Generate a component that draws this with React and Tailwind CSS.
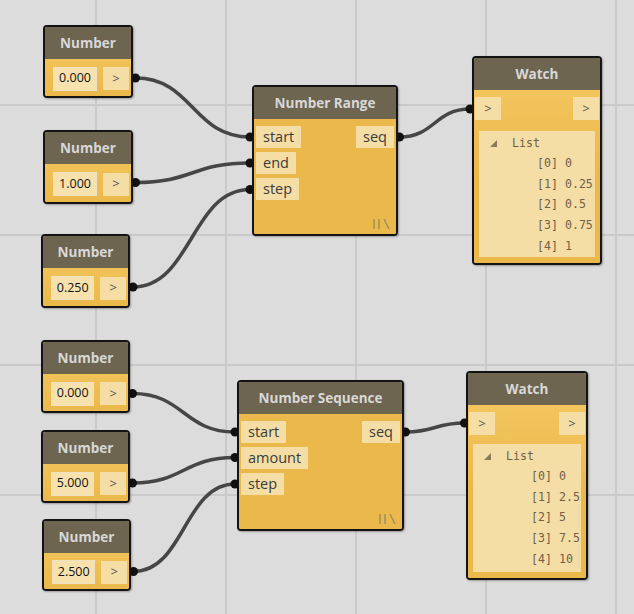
import React from "react";

const SANS = { fontFamily: '"Open Sans", "Noto Sans", sans-serif' };
const MONO = { fontFamily: '"DejaVu Sans Mono", "Liberation Mono", monospace' };

// Connector wires: [fromX, fromY, toX, toY]
const WIRES = [
  [135.5, 78, 250, 137],
  [135.5, 182.5, 250, 163],
  [133, 287, 250, 189.5],
  [399.5, 137, 470, 109],
  [132.5, 393.5, 235, 432],
  [132.5, 483, 235, 457.5],
  [133.5, 571.5, 235, 484],
  [405.5, 432, 464.5, 423],
];

const GRID_X = [96, 226, 356, 486, 616];
const GRID_Y = [105, 235, 365, 495];

function wirePath([x1, y1, x2, y2]) {
  const d = (x2 - x1) * 0.5;
  return `M ${x1} ${y1} C ${x1 + d} ${y1}, ${x2 - d} ${y2}, ${x2} ${y2}`;
}

function CanvasLayer() {
  return (
    <svg className="absolute inset-0" width="634" height="614" viewBox="0 0 634 614">
      {GRID_X.map((x) => (
        <line key={"gx" + x} x1={x} y1="0" x2={x} y2="614" stroke="#cacaca" strokeWidth="2" />
      ))}
      {GRID_Y.map((y) => (
        <line key={"gy" + y} x1="0" y1={y} x2="634" y2={y} stroke="#cacaca" strokeWidth="2" />
      ))}
      {WIRES.map((w, i) => (
        <path key={"w" + i} d={wirePath(w)} fill="none" stroke="#464646" strokeWidth="3.5" />
      ))}
      {WIRES.map((w, i) => (
        <g key={"d" + i}>
          <circle cx={w[0]} cy={w[1]} r="4.5" fill="#111" />
          <circle cx={w[2]} cy={w[3]} r="4.5" fill="#111" />
        </g>
      ))}
    </svg>
  );
}

function Header({ title, className }) {
  return (
    <div
      className={"flex shrink-0 items-center justify-center bg-[#6e6550] text-[13.5px] font-bold text-[#d8d8d8] " + className}
      style={SANS}
    >
      {title}
    </div>
  );
}

function NumberNode({ pos, value }) {
  return (
    <div
      className={"absolute flex flex-col overflow-hidden rounded-[4px] border-2 border-[#141414] shadow-[1px_1px_2px_rgba(0,0,0,0.3)] " + pos}
    >
      <Header title="Number" className="h-[32px]" />
      <div className="flex flex-1 items-center gap-[6px] bg-gradient-to-b from-[#f1c258] to-[#ebb84a] pl-[8px] pr-[2px] pt-[2px]">
        <div
          className="flex h-[24px] w-[44px] items-center justify-center border border-[#efe2c4] bg-[#f7e2ae] text-[12.5px] text-[#111]"
          style={SANS}
        >
          {value}
        </div>
        <div
          className="flex h-[23px] w-[26px] items-center justify-center bg-[#f5dea6] text-[13px] text-[#555]"
          style={SANS}
        >
          &gt;
        </div>
      </div>
    </div>
  );
}

function Lacing() {
  return (
    <svg width="18" height="12" viewBox="0 0 18 12" className="absolute bottom-[4px] right-[5px]">
      <line x1="1" y1="1" x2="1" y2="11" stroke="#9f8a58" strokeWidth="1.4" />
      <line x1="6" y1="1" x2="6" y2="11" stroke="#9f8a58" strokeWidth="1.4" />
      <line x1="11" y1="1" x2="16" y2="11" stroke="#9f8a58" strokeWidth="1.4" />
    </svg>
  );
}

function PortLabel({ children }) {
  return (
    <div
      className="flex h-[22px] items-center bg-[#f5dea6] px-[7px] text-[14.5px] leading-none text-[#3b3b3b]"
      style={SANS}
    >
      {children}
    </div>
  );
}

function FunctionNode({ pos, title, inputs }) {
  return (
    <div
      className={"absolute flex flex-col overflow-hidden rounded-[4px] border-2 border-[#141414] shadow-[1px_1px_2px_rgba(0,0,0,0.3)] " + pos}
    >
      <Header title={title} className="h-[32px]" />
      <div className="relative flex flex-1 justify-between bg-[#ebb94b] px-[2px] pt-[7px]">
        <div className="flex flex-col items-start gap-[4px]">
          {inputs.map((p) => (
            <PortLabel key={p}>{p}</PortLabel>
          ))}
        </div>
        <div className="flex flex-col items-end">
          <PortLabel>seq</PortLabel>
        </div>
        <Lacing />
      </div>
    </div>
  );
}

function WatchNode({ pos, items, pad }) {
  return (
    <div
      className={"absolute flex flex-col overflow-hidden rounded-[4px] border-2 border-[#141414] shadow-[1px_1px_2px_rgba(0,0,0,0.3)] " + pos}
    >
      <Header title="Watch" className="h-[32px]" />
      <div className="flex flex-1 flex-col bg-gradient-to-b from-[#f3c55d] via-[#ebb84a] to-[#ebb84a] pb-[6px] pt-[7px]">
        <div className="flex justify-between px-[1px]">
          {[0, 1].map((k) => (
            <div
              key={k}
              className="flex h-[23px] w-[26px] items-center justify-center bg-[#f5dea6] text-[13px] text-[#555]"
              style={SANS}
            >
              &gt;
            </div>
          ))}
        </div>
        <div className={"mx-[5px] flex flex-1 flex-col bg-[#f5dea6] pt-[2px] text-[11.6px] text-[#6e6147] " + pad} style={MONO}>
          <div className="relative flex h-[20.6px] items-center">
            <svg width="8" height="8" viewBox="0 0 8 8" className="absolute left-[11px] top-[7px]">
              <polygon points="7,0 7,7 0,7" fill="#8a7b57" />
            </svg>
            <span className="ml-[33px]">List</span>
          </div>
          {items.map((v, i) => (
            <div key={i} className="flex h-[20.6px] items-center pl-[58px] whitespace-pre">
              {`[${i}] ${v}`}
            </div>
          ))}
        </div>
      </div>
    </div>
  );
}

export default function App() {
  return (
    <div className="relative h-[614px] w-[634px] overflow-hidden bg-[#dcdcdc]">
      <CanvasLayer />

      <NumberNode pos="left-[43px] top-[25px] w-[90px] h-[73px]" value="0.000" />
      <NumberNode pos="left-[43px] top-[130px] w-[90px] h-[74px]" value="1.000" />
      <NumberNode pos="left-[41px] top-[234px] w-[89px] h-[74px]" value="0.250" />
      <NumberNode pos="left-[41px] top-[340px] w-[89px] h-[73px]" value="0.000" />
      <NumberNode pos="left-[41px] top-[430px] w-[89px] h-[73px]" value="5.000" />
      <NumberNode pos="left-[42px] top-[519px] w-[89px] h-[72px]" value="2.500" />

      <FunctionNode
        pos="left-[252px] top-[85px] w-[146px] h-[151px]"
        title="Number Range"
        inputs={["start", "end", "step"]}
      />
      <FunctionNode
        pos="left-[237px] top-[380px] w-[167px] h-[151px]"
        title="Number Sequence"
        inputs={["start", "amount", "step"]}
      />

      <WatchNode
        pos="left-[472px] top-[56px] w-[130px] h-[209px]"
        items={["0", "0.25", "0.5", "0.75", "1"]}
        pad="mt-[11px]"
      />
      <WatchNode
        pos="left-[466px] top-[371px] w-[122px] h-[209px]"
        items={["0", "2.5", "5", "7.5", "10"]}
        pad="mt-[9px]"
      />
    </div>
  );
}
